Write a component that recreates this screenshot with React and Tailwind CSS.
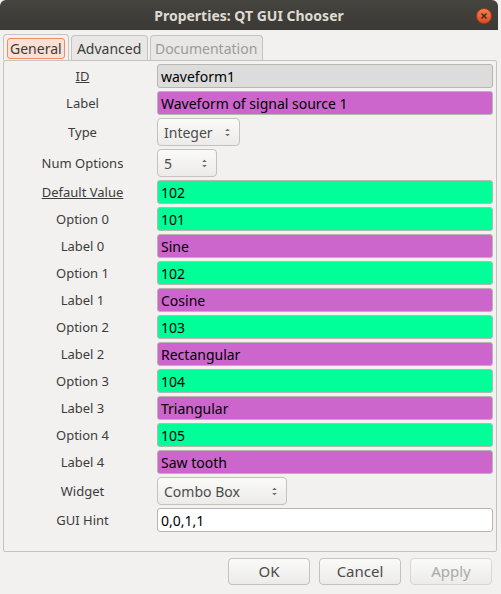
import React from "react";

const GREEN = "bg-[#00ff99]";
const PURPLE = "bg-[#cc66cc]";

const rows = [
  { label: "ID", kind: "text", value: "waveform1", bg: "bg-[#dcdcdc]", underline: true },
  { label: "Label", kind: "text", value: "Waveform of signal source 1", bg: PURPLE },
  { label: "Type", kind: "combo", value: "Integer", width: "w-[83px]" },
  { label: "Num Options", kind: "combo", value: "5", width: "w-[60px]" },
  { label: "Default Value", kind: "text", value: "102", bg: GREEN, underline: true },
  { label: "Option 0", kind: "text", value: "101", bg: GREEN },
  { label: "Label 0", kind: "text", value: "Sine", bg: PURPLE },
  { label: "Option 1", kind: "text", value: "102", bg: GREEN },
  { label: "Label 1", kind: "text", value: "Cosine", bg: PURPLE },
  { label: "Option 2", kind: "text", value: "103", bg: GREEN },
  { label: "Label 2", kind: "text", value: "Rectangular", bg: PURPLE },
  { label: "Option 3", kind: "text", value: "104", bg: GREEN },
  { label: "Label 3", kind: "text", value: "Triangular", bg: PURPLE },
  { label: "Option 4", kind: "text", value: "105", bg: GREEN },
  { label: "Label 4", kind: "text", value: "Saw tooth", bg: PURPLE },
  { label: "Widget", kind: "combo", value: "Combo Box", width: "w-[130px]" },
  { label: "GUI Hint", kind: "text", value: "0,0,1,1", bg: "bg-white" },
];

function Arrows() {
  return (
    <svg width="7" height="11" viewBox="0 0 7 11" className="text-[#6a6a6a]">
      <path d="M1.2 4 L3.5 1.8 L5.8 4 Z" fill="currentColor" />
      <path d="M1.2 7 L3.5 9.2 L5.8 7 Z" fill="currentColor" />
    </svg>
  );
}

function Field({ row }) {
  if (row.kind === "combo") {
    return (
      <div className={`${row.width} h-[28px] flex items-center justify-between pl-[6px] pr-[8px] rounded-[4px] border border-[#c4c2bd] bg-gradient-to-b from-[#fafaf9] to-[#ecebe9] text-[14px] text-[#4c4c4c]`}>
        <span>{row.value}</span>
        <Arrows />
      </div>
    );
  }
  return (
    <div className={`flex-1 h-[24px] flex items-center px-[3px] rounded-[3px] border border-[#b8b6b1] ${row.bg} text-[14px] text-black`}>
      {row.value}
    </div>
  );
}

export default function App() {
  return (
    <div
      className="w-[501px] h-[594px] bg-[#f2f1f0] flex flex-col text-[13px] text-[#3c3c3c]"
      style={{ fontFamily: "'Noto Sans', 'DejaVu Sans', sans-serif" }}
    >
      {/* title bar */}
      <div className="h-[30px] mr-[3px] rounded-t-[6px] bg-gradient-to-b from-[#45443f] to-[#3a3935] flex items-center relative">
        <div className="flex-1 text-center font-bold text-[14px] text-[#dfdbd2]">Properties: QT GUI Chooser</div>
        <div className="absolute right-[6px] top-[8px] w-[16px] h-[16px] rounded-full bg-gradient-to-b from-[#f4804f] to-[#dd4b1d] border border-[#a6391a] flex items-center justify-center">
          <svg width="8" height="8" viewBox="0 0 8 8">
            <path d="M1.5 1.5 L6.5 6.5 M6.5 1.5 L1.5 6.5" stroke="#3a2a22" strokeWidth="1.4" />
          </svg>
        </div>
      </div>

      {/* tabs */}
      <div className="flex items-end gap-[2px] pl-[3px] pt-[4px] h-[30px]">
        <div className="h-[26px] px-[3px] pt-[3px] rounded-t-[4px] border border-b-0 border-[#c6c4bf] bg-[#f2f1f0]">
          <div className="h-[21px] px-[2px] flex items-center rounded-[3px] border border-[#f08b64] bg-[#fbe0d4] text-[#3c3c3c] text-[14px]">General</div>
        </div>
        <div className="h-[25px] w-[77px] flex items-center justify-center rounded-t-[4px] border border-b-0 border-[#c6c4bf] bg-[#e8e7e5] text-[14px] text-[#3c3c3c]">Advanced</div>
        <div className="h-[25px] w-[113px] flex items-center justify-center rounded-t-[4px] border border-b-0 border-[#c6c4bf] bg-[#e8e7e5] text-[14px] text-[#9b9b9b]">Documentation</div>
      </div>

      {/* panel */}
      <div className="ml-[3px] mr-[4px] h-[492px] border border-[#c6c4bf] rounded-[2px] pl-[4px] pr-[3px] pt-[3px] flex flex-col gap-[3px]">
        {rows.map((row) => (
          <div key={row.label} className="flex items-center">
            <div className="w-[149px] text-center pt-[1px]">
              <span className={row.underline ? "underline" : ""}>{row.label}</span>
            </div>
            <Field row={row} />
          </div>
        ))}
      </div>

      {/* buttons */}
      <div className="flex justify-end gap-[9px] pr-[9px] pt-[6px]">
        {["OK", "Cancel", "Apply"].map((b) => (
          <div
            key={b}
            className={`w-[82px] h-[27px] flex items-center justify-center rounded-[4px] border bg-gradient-to-b from-[#fafaf9] to-[#ecebe9] text-[15px] ${b === "Apply" ? "text-[#a9a9a9] border-[#d8d6d2]" : "text-[#4c4c4c] border-[#c4c2bd]"}`}
          >
            {b}
          </div>
        ))}
      </div>
    </div>
  );
}
